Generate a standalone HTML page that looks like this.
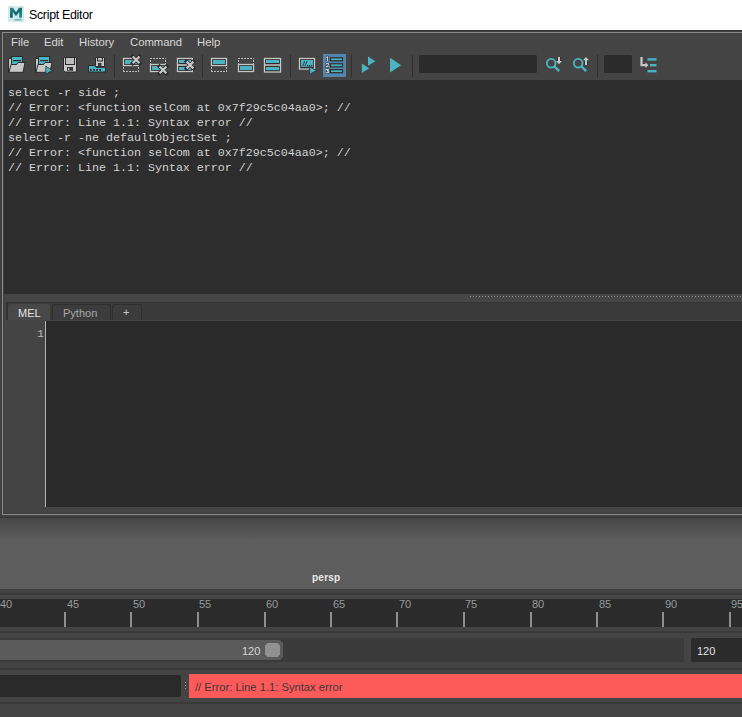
<!DOCTYPE html>
<html><head><meta charset="utf-8">
<style>
*{margin:0;padding:0;box-sizing:border-box}
html,body{width:742px;height:717px;overflow:hidden;background:#444;font-family:"Liberation Sans",sans-serif}
.a{position:absolute}
.t{position:absolute;white-space:pre;line-height:1}
.ui{font-size:11px;color:#d8d8d8}
.mono{font-family:"Liberation Mono",monospace;font-size:11.67px;letter-spacing:0;color:#d2d2d2}
svg{position:absolute;overflow:visible}
</style></head><body>
<!-- title bar -->
<div class="a" style="left:0;top:0;width:742px;height:30px;background:#fff"></div>
<div class="a" style="left:8px;top:6px;width:16px;height:16px;background:#d4e9ea"></div>
<svg style="left:0;top:0" width="30" height="30" viewBox="0 0 30 30">
 <defs><linearGradient id="mg" x1="0" y1="0" x2="1" y2="1"><stop offset="0" stop-color="#2f8a8e"/><stop offset="0.5" stop-color="#0f6a70"/><stop offset="1" stop-color="#1c9ea2"/></linearGradient></defs>
 <path d="M10 7.8 L13 7.8 L16 12.3 L19 7.8 L22 7.8 L22 17.8 L19.2 17.8 L19.2 12 L16.4 15.8 L15.6 15.8 L12.8 12 L12.8 17.8 L10 17.8 Z" fill="url(#mg)"/>
 <rect x="14.5" y="19" width="7" height="1.6" fill="#6bb8bb"/>
</svg>
<div class="t" style="left:29px;top:9px;font-size:12.4px;letter-spacing:-0.3px;color:#000">Script Editor</div>
<div class="a" style="left:0;top:30px;width:742px;height:1px;background:#353535"></div>

<!-- window frame -->
<div class="a" style="left:0;top:31px;width:742px;height:487px;background:#404040"></div>
<div class="a" style="left:2px;top:32px;width:740px;height:483px;background:#8a8a8a"></div>
<div class="a" style="left:3px;top:33px;width:739px;height:481px;background:#3f3f3f"></div>
<div class="a" style="left:4px;top:34px;width:738px;height:479px;background:#444"></div>
<div class="a" style="left:0;top:515px;width:742px;height:2px;background:#414141"></div>
<div class="a" style="left:0;top:517px;width:742px;height:1px;background:#373737"></div>

<!-- menu -->
<div class="t ui" style="left:11px;top:37px;font-size:11.3px">File</div>
<div class="t ui" style="left:44px;top:37px;font-size:11.3px">Edit</div>
<div class="t ui" style="left:79px;top:37px;font-size:11.3px">History</div>
<div class="t ui" style="left:130px;top:37px;font-size:11.3px">Command</div>
<div class="t ui" style="left:197px;top:37px;font-size:11.3px">Help</div>

<!-- toolbar (placeholder) -->
<svg class="a" style="left:0;top:0" width="742" height="80" viewBox="0 0 742 80">
<rect x="11.5" y="56.5" width="11" height="8" fill="#4bb4c2" stroke="#2b2b2b"/>
<rect x="13" y="60" width="8" height="1.2" fill="#2b2b2b"/>
<path d="M8.5 58.5 H11.5 V72 H8.5 Z" fill="#c8c8c8" stroke="#2b2b2b"/>
<path d="M11 64.5 H16.5 L18 62.5 H25 L23 72.3 H9 Z" fill="#c8c8c8" stroke="#2b2b2b"/>
<rect x="38.5" y="56.5" width="11" height="8" fill="#4bb4c2" stroke="#2b2b2b"/>
<rect x="40" y="60" width="8" height="1.2" fill="#2b2b2b"/>
<path d="M35.5 58.5 H38.5 V72 H35.5 Z" fill="#c8c8c8" stroke="#2b2b2b"/>
<path d="M38 64.5 H43.5 L45 62.5 H52 L50 72.3 H36 Z" fill="#c8c8c8" stroke="#2b2b2b"/>
<path d="M45.8 66.2 L52.2 70.4 L45.8 74.2 Z" fill="#4bb4c2" stroke="#2b2b2b" stroke-width="0.8"/>
<path d="M63.5 57.5 H76.5 V72 H65 L63.5 70.5 Z" fill="#c8c8c8" stroke="#2b2b2b"/>
<rect x="65.5" y="57.5" width="9" height="7" fill="#bdbdbd" stroke="#2b2b2b"/>
<rect x="67" y="67" width="6" height="3.7" fill="#333"/>
<rect x="68" y="68" width="1.3" height="2" fill="#ccc"/>
<path d="M95.5 57.5 H104.5 V66.5 H96.5 L95.5 65.5 Z" fill="#c8c8c8" stroke="#2b2b2b"/>
<rect x="97.5" y="57.5" width="5" height="3.5" fill="#bdbdbd" stroke="#2b2b2b"/>
<rect x="98" y="63" width="3.5" height="2.8" fill="#333"/>
<path d="M88.5 65.5 H94.3 L96 67.3 H105.5 V72 H88.5 Z" fill="#4bb4c2" stroke="#2b2b2b"/>
<rect x="90" y="69" width="1.8" height="1.8" fill="#3a2020"/>
<rect x="93.2" y="69" width="1.8" height="1.8" fill="#3a2020"/>
<rect x="96.1" y="69" width="1.8" height="1.8" fill="#3a2020"/>
<rect x="99.2" y="69" width="1.8" height="1.8" fill="#3a2020"/>
<rect x="114" y="55" width="1" height="22" fill="#2e2e2e"/>
<rect x="202" y="55" width="1" height="22" fill="#2e2e2e"/>
<rect x="290" y="55" width="1" height="22" fill="#2e2e2e"/>
<rect x="351" y="55" width="1" height="22" fill="#2e2e2e"/>
<rect x="412" y="55" width="1" height="22" fill="#2e2e2e"/>
<rect x="597" y="55" width="1" height="22" fill="#2e2e2e"/>
<rect x="123" y="65" width="2" height="1" fill="#b8b8b8"/>
<rect x="126" y="65" width="2" height="1" fill="#b8b8b8"/>
<rect x="129" y="65" width="2" height="1" fill="#b8b8b8"/>
<rect x="132" y="65" width="2" height="1" fill="#b8b8b8"/>
<rect x="135" y="65" width="2" height="1" fill="#b8b8b8"/>
<rect x="138" y="65" width="1" height="1" fill="#b8b8b8"/>
<rect x="123" y="71" width="2" height="1" fill="#b8b8b8"/>
<rect x="126" y="71" width="2" height="1" fill="#b8b8b8"/>
<rect x="129" y="71" width="2" height="1" fill="#b8b8b8"/>
<rect x="132" y="71" width="2" height="1" fill="#b8b8b8"/>
<rect x="135" y="71" width="2" height="1" fill="#b8b8b8"/>
<rect x="138" y="71" width="1" height="1" fill="#b8b8b8"/>
<rect x="123" y="67" width="1" height="2" fill="#b8b8b8"/>
<rect x="123" y="70" width="1" height="1" fill="#b8b8b8"/>
<rect x="138" y="67" width="1" height="2" fill="#b8b8b8"/>
<rect x="138" y="70" width="1" height="1" fill="#b8b8b8"/>
<rect x="123.5" y="58.5" width="15" height="7" fill="#2b2b2b" stroke="#c8c8c8" stroke-width="1.3"/>
<rect x="125" y="60" width="12" height="4" fill="#4bb4c2"/>
<path d="M132.7 56.5 L139.5 63.3 M139.5 56.5 L132.7 63.3" stroke="#2b2b2b" stroke-width="3.8" stroke-linecap="square"/>
<path d="M132.7 56.5 L139.5 63.3 M139.5 56.5 L132.7 63.3" stroke="#c8c8c8" stroke-width="2.2"/>
<rect x="150" y="58" width="2" height="1" fill="#b8b8b8"/>
<rect x="153" y="58" width="2" height="1" fill="#b8b8b8"/>
<rect x="156" y="58" width="2" height="1" fill="#b8b8b8"/>
<rect x="159" y="58" width="2" height="1" fill="#b8b8b8"/>
<rect x="162" y="58" width="2" height="1" fill="#b8b8b8"/>
<rect x="165" y="58" width="1" height="1" fill="#b8b8b8"/>
<rect x="150" y="64" width="2" height="1" fill="#b8b8b8"/>
<rect x="153" y="64" width="2" height="1" fill="#b8b8b8"/>
<rect x="156" y="64" width="2" height="1" fill="#b8b8b8"/>
<rect x="159" y="64" width="2" height="1" fill="#b8b8b8"/>
<rect x="162" y="64" width="2" height="1" fill="#b8b8b8"/>
<rect x="165" y="64" width="1" height="1" fill="#b8b8b8"/>
<rect x="150" y="60" width="1" height="2" fill="#b8b8b8"/>
<rect x="150" y="63" width="1" height="1" fill="#b8b8b8"/>
<rect x="165" y="60" width="1" height="2" fill="#b8b8b8"/>
<rect x="165" y="63" width="1" height="1" fill="#b8b8b8"/>
<rect x="150.5" y="64.5" width="15" height="7" fill="#2b2b2b" stroke="#c8c8c8" stroke-width="1.3"/>
<rect x="152" y="66" width="12" height="4" fill="#4bb4c2"/>
<path d="M159.6 66.5 L166.4 73.30000000000001 M166.4 66.5 L159.6 73.30000000000001" stroke="#2b2b2b" stroke-width="3.8" stroke-linecap="square"/>
<path d="M159.6 66.5 L166.4 73.30000000000001 M166.4 66.5 L159.6 73.30000000000001" stroke="#c8c8c8" stroke-width="2.2"/>
<rect x="177.5" y="58.5" width="15" height="13" fill="#2b2b2b" stroke="#c8c8c8" stroke-width="1.3"/>
<rect x="177" y="64.2" width="10" height="1.6" fill="#c8c8c8"/>
<rect x="179" y="60" width="12" height="3" fill="#4bb4c2"/>
<rect x="179" y="67" width="12" height="3" fill="#4bb4c2"/>
<path d="M186.6 61.6 L193.4 68.4 M193.4 61.6 L186.6 68.4" stroke="#2b2b2b" stroke-width="3.8" stroke-linecap="square"/>
<path d="M186.6 61.6 L193.4 68.4 M193.4 61.6 L186.6 68.4" stroke="#c8c8c8" stroke-width="2.2"/>
<rect x="211" y="65" width="2" height="1" fill="#b8b8b8"/>
<rect x="214" y="65" width="2" height="1" fill="#b8b8b8"/>
<rect x="217" y="65" width="2" height="1" fill="#b8b8b8"/>
<rect x="220" y="65" width="2" height="1" fill="#b8b8b8"/>
<rect x="223" y="65" width="2" height="1" fill="#b8b8b8"/>
<rect x="226" y="65" width="1" height="1" fill="#b8b8b8"/>
<rect x="211" y="71" width="2" height="1" fill="#b8b8b8"/>
<rect x="214" y="71" width="2" height="1" fill="#b8b8b8"/>
<rect x="217" y="71" width="2" height="1" fill="#b8b8b8"/>
<rect x="220" y="71" width="2" height="1" fill="#b8b8b8"/>
<rect x="223" y="71" width="2" height="1" fill="#b8b8b8"/>
<rect x="226" y="71" width="1" height="1" fill="#b8b8b8"/>
<rect x="211" y="67" width="1" height="2" fill="#b8b8b8"/>
<rect x="211" y="70" width="1" height="1" fill="#b8b8b8"/>
<rect x="226" y="67" width="1" height="2" fill="#b8b8b8"/>
<rect x="226" y="70" width="1" height="1" fill="#b8b8b8"/>
<rect x="211.5" y="58.5" width="15" height="7" fill="#2b2b2b" stroke="#c8c8c8" stroke-width="1.3"/>
<rect x="213" y="60" width="12" height="4" fill="#4bb4c2"/>
<rect x="238" y="58" width="2" height="1" fill="#b8b8b8"/>
<rect x="241" y="58" width="2" height="1" fill="#b8b8b8"/>
<rect x="244" y="58" width="2" height="1" fill="#b8b8b8"/>
<rect x="247" y="58" width="2" height="1" fill="#b8b8b8"/>
<rect x="250" y="58" width="2" height="1" fill="#b8b8b8"/>
<rect x="253" y="58" width="1" height="1" fill="#b8b8b8"/>
<rect x="238" y="64" width="2" height="1" fill="#b8b8b8"/>
<rect x="241" y="64" width="2" height="1" fill="#b8b8b8"/>
<rect x="244" y="64" width="2" height="1" fill="#b8b8b8"/>
<rect x="247" y="64" width="2" height="1" fill="#b8b8b8"/>
<rect x="250" y="64" width="2" height="1" fill="#b8b8b8"/>
<rect x="253" y="64" width="1" height="1" fill="#b8b8b8"/>
<rect x="238" y="60" width="1" height="2" fill="#b8b8b8"/>
<rect x="238" y="63" width="1" height="1" fill="#b8b8b8"/>
<rect x="253" y="60" width="1" height="2" fill="#b8b8b8"/>
<rect x="253" y="63" width="1" height="1" fill="#b8b8b8"/>
<rect x="238.5" y="64.5" width="15" height="7" fill="#2b2b2b" stroke="#c8c8c8" stroke-width="1.3"/>
<rect x="240" y="66" width="12" height="4" fill="#4bb4c2"/>
<rect x="264.5" y="58.5" width="16" height="13.5" fill="#2b2b2b" stroke="#c8c8c8" stroke-width="1.3"/>
<rect x="264" y="64.3" width="17" height="1.5" fill="#c8c8c8"/>
<rect x="266" y="60" width="13" height="3" fill="#4bb4c2"/>
<rect x="266" y="67" width="13" height="3.2" fill="#4bb4c2"/>
<rect x="299.5" y="58.5" width="15" height="10.5" fill="#2b2b2b" stroke="#c8c8c8" stroke-width="1.3"/>
<rect x="301" y="60" width="12" height="6.8" fill="#4bb4c2"/>
<path d="M302.6 66 L304.8 61.2 M304.9 66 L307.1 61.2" stroke="#2b2b2b" stroke-width="0.85"/>
<rect x="307" y="65" width="1.2" height="1.2" fill="#2b2b2b"/>
<rect x="309" y="65" width="1.2" height="1.2" fill="#2b2b2b"/>
<rect x="311" y="65" width="1.2" height="1.2" fill="#2b2b2b"/>
<path d="M309.6 66.8 L316.3 70.5 L309.6 74.4 Z" fill="#4bb4c2" stroke="#2b2b2b" stroke-width="0.8"/>
<rect x="323" y="54" width="23" height="23" fill="#5385ad"/>
<rect x="330.5" y="57.8" width="12" height="3" fill="#4bb4c2" stroke="#2b2b2b" stroke-width="1.2"/>
<rect x="330.5" y="63.8" width="12" height="3" fill="#4bb4c2" stroke="#2b2b2b" stroke-width="1.2"/>
<rect x="330.5" y="69.7" width="12" height="3" fill="#4bb4c2" stroke="#2b2b2b" stroke-width="1.2"/>
<path d="M326.2 57.6 L327.6 56.8 V61 M325.9 64.2 Q327.4 62.8 328.6 64 Q328.8 64.8 327.8 65.6 L326 66.7 H328.9 M325.9 69.6 H328.6 L327.2 70.9 Q328.9 71.1 328.7 72.1 Q328 73.3 325.9 72.6" fill="none" stroke="#2b2b2b" stroke-width="2.4" stroke-linejoin="round"/>
<path d="M326.2 57.6 L327.6 56.8 V61 M325.9 64.2 Q327.4 62.8 328.6 64 Q328.8 64.8 327.8 65.6 L326 66.7 H328.9 M325.9 69.6 H328.6 L327.2 70.9 Q328.9 71.1 328.7 72.1 Q328 73.3 325.9 72.6" fill="none" stroke="#d2d2d2" stroke-width="1.1" stroke-linejoin="round"/>
<path d="M368 56.5 L375.4 61.2 L368 65.8 Z" fill="#4bb4c2"/>
<path d="M361.8 63.6 L369.3 68.3 L361.8 73 Z" fill="#4bb4c2"/>
<path d="M390 57.8 L401.2 65.2 L390 72.6 Z" fill="#4bb4c2"/>
<rect x="419" y="55" width="118" height="18" rx="1.5" fill="#2b2b2b"/>
<circle cx="551.2" cy="63.2" r="4.3" fill="none" stroke="#4bb4c2" stroke-width="1.9"/>
<path d="M554.4000000000001 66.4 L559.2 71.2" stroke="#4bb4c2" stroke-width="2.4"/>
<path d="M559.0 57 V62" stroke="#2b2b2b" stroke-width="3.4"/>
<path d="M559.0 57 V62" stroke="#c8c8c8" stroke-width="2"/>
<path d="M556.1 61 L559.0 64.2 L561.9 61 Z" fill="#c8c8c8"/>
<circle cx="578.2" cy="63.2" r="4.3" fill="none" stroke="#4bb4c2" stroke-width="1.9"/>
<path d="M581.4000000000001 66.4 L586.2 71.2" stroke="#4bb4c2" stroke-width="2.4"/>
<path d="M586.0 65 V60" stroke="#2b2b2b" stroke-width="3.4"/>
<path d="M586.0 65 V60" stroke="#c8c8c8" stroke-width="2"/>
<path d="M583.1 60.2 L586.0 57 L588.9 60.2 Z" fill="#c8c8c8"/>
<rect x="604" y="55" width="28" height="18" rx="1.5" fill="#2b2b2b"/>
<path d="M641.5 57 V65.2 H646" fill="none" stroke="#c8c8c8" stroke-width="2.2"/>
<path d="M645.5 62.3 L648.3 65.2 L645.5 68.1 Z" fill="#c8c8c8"/>
<rect x="647.5" y="58.2" width="9" height="2.4" fill="#4bb4c2"/>
<rect x="650" y="64" width="6.5" height="2.4" fill="#4bb4c2"/>
<rect x="647.5" y="70" width="9" height="2.4" fill="#4bb4c2"/>
</svg>

<!-- output -->
<div class="a" style="left:4px;top:80px;width:738px;height:214px;background:#2d2d2d"></div>
<div class="t mono" style="left:8px;top:86px;line-height:15px">select -r side ;
// Error: &lt;function selCom at 0x7f29c5c04aa0&gt;; //
// Error: Line 1.1: Syntax error //
select -r -ne defaultObjectSet ;
// Error: &lt;function selCom at 0x7f29c5c04aa0&gt;; //
// Error: Line 1.1: Syntax error //</div>

<!-- splitter -->
<div class="a" style="left:4px;top:294px;width:738px;height:8px;background:#464646"></div>
<div class="a" style="left:470px;top:296px;width:272px;height:1px;background:repeating-linear-gradient(90deg,#8e8e8e 0 1px,transparent 1px 3px)"></div>

<!-- tab widget -->
<div class="a" style="left:6px;top:302px;width:736px;height:19px;background:#333"></div>
<div class="a" style="left:8px;top:303px;width:734px;height:17px;background:#3a3a3a"></div>
<div class="a" style="left:8px;top:304px;width:42px;height:16px;background:#484848;border-radius:3px 3px 0 0"></div>
<div class="a" style="left:52px;top:304px;width:59px;height:16px;background:#3c3c3c;border:1px solid #2f2f2f;border-bottom:none;border-radius:3px 3px 0 0"></div>
<div class="a" style="left:112px;top:304px;width:30px;height:16px;background:#3c3c3c;border:1px solid #2f2f2f;border-bottom:none;border-radius:3px 3px 0 0"></div>
<div class="t ui" style="left:18px;top:308px;color:#e4e4e4">MEL</div>
<div class="t ui" style="left:63px;top:308px;color:#a8a8a8">Python</div>
<div class="t ui" style="left:123px;top:307px;color:#c8c8c8">+</div>
<div class="a" style="left:4px;top:320px;width:738px;height:1px;background:#474747"></div>

<!-- input -->
<div class="a" style="left:4px;top:321px;width:41px;height:186px;background:#444"></div>
<div class="a" style="left:45px;top:321px;width:1px;height:186px;background:#b4b4b4"></div>
<div class="a" style="left:46px;top:321px;width:696px;height:186px;background:#2a2a2a"></div>
<div class="t mono" style="left:37px;top:329px;color:#b8b8b8">1</div>

<!-- viewport -->
<div class="a" style="left:0;top:518px;width:742px;height:71px;background:linear-gradient(#474747,#5d5d5d 23px)"></div>
<div class="t" style="left:312px;top:573px;font-size:10px;font-weight:bold;color:#eaeaea;letter-spacing:0.25px">persp</div>
<div class="a" style="left:0;top:589px;width:742px;height:1px;background:#3d3d3d"></div>
<div class="a" style="left:0;top:590px;width:742px;height:3px;background:#434343"></div>
<div class="a" style="left:0;top:593px;width:742px;height:2px;background:#3b3b3b"></div>
<div class="a" style="left:0;top:595px;width:742px;height:4px;background:#464646"></div>

<!-- timeline -->
<div class="a" style="left:0;top:599px;width:742px;height:28px;background:#2b2b2b"></div>
<div class="a" style="left:64px;top:612px;width:2px;height:15px;background:#8e8e8e"></div>
<div class="a" style="left:130px;top:612px;width:2px;height:15px;background:#8e8e8e"></div>
<div class="a" style="left:197px;top:612px;width:2px;height:15px;background:#8e8e8e"></div>
<div class="a" style="left:264px;top:612px;width:2px;height:15px;background:#8e8e8e"></div>
<div class="a" style="left:330px;top:612px;width:2px;height:15px;background:#8e8e8e"></div>
<div class="a" style="left:396px;top:612px;width:2px;height:15px;background:#8e8e8e"></div>
<div class="a" style="left:463px;top:612px;width:2px;height:15px;background:#8e8e8e"></div>
<div class="a" style="left:530px;top:612px;width:2px;height:15px;background:#8e8e8e"></div>
<div class="a" style="left:596px;top:612px;width:2px;height:15px;background:#8e8e8e"></div>
<div class="a" style="left:662px;top:612px;width:2px;height:15px;background:#8e8e8e"></div>
<div class="a" style="left:729px;top:612px;width:2px;height:15px;background:#8e8e8e"></div>
<div class="t ui" style="left:0px;top:599px;color:#9a9a9a">40</div>
<div class="t ui" style="left:67px;top:599px;color:#9a9a9a">45</div>
<div class="t ui" style="left:133px;top:599px;color:#9a9a9a">50</div>
<div class="t ui" style="left:199px;top:599px;color:#9a9a9a">55</div>
<div class="t ui" style="left:266px;top:599px;color:#9a9a9a">60</div>
<div class="t ui" style="left:333px;top:599px;color:#9a9a9a">65</div>
<div class="t ui" style="left:399px;top:599px;color:#9a9a9a">70</div>
<div class="t ui" style="left:465px;top:599px;color:#9a9a9a">75</div>
<div class="t ui" style="left:532px;top:599px;color:#9a9a9a">80</div>
<div class="t ui" style="left:599px;top:599px;color:#9a9a9a">85</div>
<div class="t ui" style="left:665px;top:599px;color:#9a9a9a">90</div>
<div class="t ui" style="left:731px;top:599px;color:#9a9a9a">95</div>

<div class="a" style="left:0;top:627px;width:742px;height:4px;background:#444"></div>
<div class="a" style="left:0;top:631px;width:742px;height:2px;background:#393939"></div>
<div class="a" style="left:0;top:633px;width:742px;height:5px;background:#444"></div>

<!-- range slider -->
<div class="a" style="left:0;top:638px;width:684px;height:24px;background:#3a3a3a"></div>
<div class="a" style="left:-10px;top:640px;width:293px;height:20px;background:#5a5a5a;clip-path:polygon(0 0,290px 0,293px 3px,293px 17px,290px 20px,0 20px)"></div>
<div class="a" style="left:265px;top:643px;width:15px;height:14px;background:#919191;clip-path:polygon(2.5px 0,12.5px 0,15px 2.5px,15px 11.5px,12.5px 14px,2.5px 14px,0 11.5px,0 2.5px)"></div>
<div class="t ui" style="left:242px;top:646px;color:#d8d8d8">120</div>
<div class="a" style="left:691px;top:638px;width:60px;height:24px;background:#2b2b2b;border-radius:2px"></div>
<div class="t ui" style="left:697px;top:646px;color:#e0e0e0">120</div>

<div class="a" style="left:0;top:662px;width:742px;height:6px;background:#434343"></div>
<div class="a" style="left:0;top:668px;width:742px;height:2px;background:#393939"></div>

<!-- command line -->
<div class="a" style="left:-10px;top:675px;width:191px;height:22px;background:#2a2a2a;border-radius:2px"></div>
<div class="a" style="left:185px;top:682px;width:1px;height:1px;background:#999"></div>
<div class="a" style="left:185px;top:685px;width:1px;height:1px;background:#999"></div>
<div class="a" style="left:185px;top:688px;width:1px;height:1px;background:#999"></div>
<div class="a" style="left:189px;top:674px;width:553px;height:24px;background:#ff5a5a"></div>
<div class="t ui" style="left:195px;top:682px;color:#383838;font-size:11.2px">// Error: Line 1.1: Syntax error</div>
<div class="a" style="left:0;top:702px;width:742px;height:2px;background:#393939"></div>
</body></html>
